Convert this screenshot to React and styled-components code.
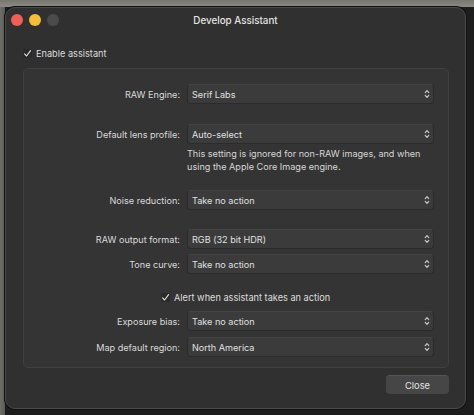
import React from 'react';
import styled, { createGlobalStyle } from 'styled-components';

const Global = createGlobalStyle`
  html, body {
    margin: 0;
    padding: 0;
  }
  body {
    width: 474px;
    height: 415px;
    overflow: hidden;
    background:
      linear-gradient(to bottom, #77766f 0, #8b8a84 7px, transparent 7px),
      linear-gradient(to right, #6f6f6a 0, #5a5a57 5px, #1d1d1d 5px);
    font-family: Inter, "Liberation Sans", sans-serif;
    -webkit-font-smoothing: antialiased;
  }
`;

const Window = styled.div`
  margin: 7px 0 0 5px;
  width: 461px;
  height: 402px;
  box-sizing: border-box;
  background: #303030;
  border: 1px solid #4a4a4a;
  border-radius: 10px;
  box-shadow: 0 0 0 1px #111;
  color: #dedede;
  display: flex;
  flex-direction: column;
`;

const TitleBar = styled.div`
  height: 24px;
  display: flex;
  align-items: center;
  position: relative;
  padding-left: 5px;
  gap: 6px;
`;

const Light = styled.span`
  width: 12px;
  height: 12px;
  border-radius: 50%;
  background: ${(p) => p.$color};
`;

const Title = styled.div`
  position: absolute;
  left: 0;
  right: 0;
  text-align: center;
  font-size: 9.8px;
  font-weight: 500;
  color: #e4e4e4;
  pointer-events: none;
`;

const Content = styled.div`
  padding: 0 16px 0 17px;
  display: flex;
  flex-direction: column;
`;

const CheckRow = styled.div`
  display: flex;
  align-items: center;
  gap: 4px;
  font-size: 9.2px;
  height: 14px;
  margin-top: ${(p) => p.$mt || 0}px;
  padding-left: ${(p) => p.$pl || 0}px;
  grid-column: 1 / -1;
`;

const Check = styled.span`
  width: 9px;
  height: 9px;
  border-radius: 2px;
  background: #2a2a2a;
  display: flex;
  align-items: center;
  justify-content: center;
  svg {
    width: 9px;
    height: 9px;
  }
`;

const Group = styled.div`
  margin-top: 8px;
  border: 1px solid #404040;
  border-radius: 5px;
  background: #343434;
  padding: 15px 14px 10px 0;
  display: grid;
  grid-template-columns: 156px 1fr;
  column-gap: 7px;
  align-items: center;
`;

const Label = styled.div`
  text-align: right;
  font-size: 9.1px;
  color: #dadada;
  margin-top: ${(p) => p.$mt || 0}px;
`;

const Select = styled.div`
  height: 20px;
  box-sizing: border-box;
  background: #3b3b3b;
  border: 1px solid #2b2b2b;
  border-top-color: #444;
  border-radius: 4px;
  display: flex;
  align-items: center;
  justify-content: space-between;
  padding: 0 3px 0 4px;
  font-size: 9.1px;
  color: #e0e0e0;
  margin-top: ${(p) => p.$mt || 0}px;
`;

const Help = styled.div`
  grid-column: 2;
  font-size: 9.1px;
  line-height: 13px;
  color: #d6d6d6;
  margin-top: 3px;
`;

const Footer = styled.div`
  display: flex;
  justify-content: flex-end;
  padding-top: 7px;
`;

const Button = styled.button`
  width: 63px;
  height: 19px;
  background: #464646;
  border: none;
  border-top: 1px solid #555;
  border-radius: 4px;
  color: #e4e4e4;
  font-family: inherit;
  font-size: 9.4px;
  padding: 0;
`;

const CheckMark = () => (
  <svg viewBox="0 0 10 10" fill="none">
    <path d="M1.8 5.4 L4 7.8 L8.4 1.8" stroke="#e8e8e8" strokeWidth="1.2" strokeLinecap="round" strokeLinejoin="round" />
  </svg>
);

const Stepper = () => (
  <svg width="6" height="10" viewBox="0 0 6 10" fill="none">
    <path d="M1.2 3.6 L3 1.6 L4.8 3.6" stroke="#cfcfcf" strokeWidth="1.1" strokeLinecap="round" strokeLinejoin="round" />
    <path d="M1.2 6.4 L3 8.4 L4.8 6.4" stroke="#cfcfcf" strokeWidth="1.1" strokeLinecap="round" strokeLinejoin="round" />
  </svg>
);

const Field = ({ label, value, mt }) => (
  <>
    <Label $mt={mt}>{label}</Label>
    <Select $mt={mt}>
      <span>{value}</span>
      <Stepper />
    </Select>
  </>
);

export default function App() {
  return (
    <>
      <Global />
      <Window>
        <TitleBar>
          <Light $color="#ed5f57" />
          <Light $color="#f4bd3a" />
          <Light $color="#4b4b4b" />
          <Title>Develop Assistant</Title>
        </TitleBar>
        <Content>
          <CheckRow $mt={14}>
            <Check>
              <CheckMark />
            </Check>
            Enable assistant
          </CheckRow>
          <Group>
            <Field label="RAW Engine:" value="Serif Labs" />
            <Field label="Default lens profile:" value="Auto-select" mt={20} />
            <Help>
              This setting is ignored for non-RAW images, and when
              <br />
              using the Apple Core Image engine.
            </Help>
            <Field label="Noise reduction:" value="Take no action" mt={17} />
            <Field label="RAW output format:" value="RGB (32 bit HDR)" mt={19} />
            <Field label="Tone curve:" value="Take no action" mt={5} />
            <CheckRow $mt={16} $pl={137}>
              <Check>
                <CheckMark />
              </Check>
              Alert when assistant takes an action
            </CheckRow>
            <Field label="Exposure bias:" value="Take no action" mt={7} />
            <Field label="Map default region:" value="North America" mt={6} />
          </Group>
          <Footer>
            <Button>Close</Button>
          </Footer>
        </Content>
      </Window>
    </>
  );
}
